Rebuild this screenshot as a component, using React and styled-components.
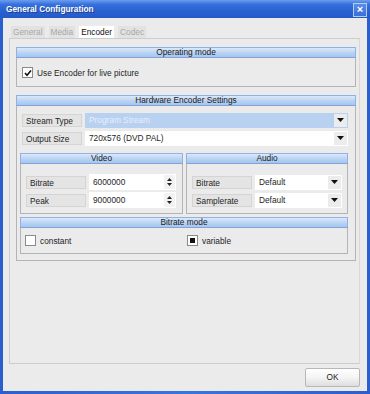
import React from "react";
import styled, { createGlobalStyle } from "styled-components";

const GlobalStyle = createGlobalStyle`
  html, body {
    margin: 0;
    padding: 0;
    background: #ffffff;
  }
  body {
    font-family: "Liberation Sans", Arial, sans-serif;
    font-size: 8.3px;
    color: #1e1e1e;
  }
`;

function App() {
  return (
    <>
      <GlobalStyle />
      <Window>
        <TitleBar>
          <Title>General Configuration</Title>
          <CloseButton>×</CloseButton>
        </TitleBar>
        <Body>
          <Tabs>
            <Tab>General</Tab>
            <Tab>Media</Tab>
            <Tab active>Encoder</Tab>
            <Tab>Codec</Tab>
          </Tabs>
          <Pane>
            <Group>
              <GroupHeader>Operating mode</GroupHeader>
              <GroupBody pad="9px 6px 8px 5px">
                <CheckRow>
                  <CheckBox>
                    <svg width="8" height="8" viewBox="0 0 8 8">
                      <path d="M1 4 L3 6.2 L7 1.5" stroke="#111" strokeWidth="1.6" fill="none" />
                    </svg>
                  </CheckBox>
                  Use Encoder for live picture
                </CheckRow>
              </GroupBody>
            </Group>

            <Group top={8}>
              <GroupHeader>Hardware Encoder Settings</GroupHeader>
              <GroupBody pad="6px 7px 6px 3px">
                <FieldRow indent={2}>
                  <Label width={60}>Stream Type</Label>
                  <Combo disabled>
                    <ComboText>Program Stream</ComboText>
                    <ComboArrow />
                  </Combo>
                </FieldRow>
                <FieldRow indent={2}>
                  <Label width={60}>Output Size</Label>
                  <Combo>
                    <ComboText>720x576 (DVD PAL)</ComboText>
                    <ComboArrow />
                  </Combo>
                </FieldRow>

                <Split>
                  <Group grow>
                    <GroupHeader>Video</GroupHeader>
                    <GroupBody pad="10px 6px 5px 5px">
                      <FieldRow>
                        <Label width={60}>Bitrate</Label>
                        <Spin>
                          <ComboText>6000000</ComboText>
                          <SpinArrows />
                        </Spin>
                      </FieldRow>
                      <FieldRow>
                        <Label width={60}>Peak</Label>
                        <Spin>
                          <ComboText>9000000</ComboText>
                          <SpinArrows />
                        </Spin>
                      </FieldRow>
                    </GroupBody>
                  </Group>
                  <Group grow>
                    <GroupHeader>Audio</GroupHeader>
                    <GroupBody pad="10px 5px 5px 5px">
                      <FieldRow>
                        <Label width={60}>Bitrate</Label>
                        <Combo>
                          <ComboText>Default</ComboText>
                          <ComboArrow />
                        </Combo>
                      </FieldRow>
                      <FieldRow>
                        <Label width={60}>Samplerate</Label>
                        <Combo>
                          <ComboText>Default</ComboText>
                          <ComboArrow />
                        </Combo>
                      </FieldRow>
                    </GroupBody>
                  </Group>
                </Split>

                <Group top={1}>
                  <GroupHeader>Bitrate mode</GroupHeader>
                  <GroupBody pad="7px 4px 7px 4px">
                    <ModeRow>
                      <CheckRow>
                        <CheckBox />
                        constant
                      </CheckRow>
                      <CheckRow>
                        <CheckBox>
                          <Dot />
                        </CheckBox>
                        variable
                      </CheckRow>
                    </ModeRow>
                  </GroupBody>
                </Group>
              </GroupBody>
            </Group>
          </Pane>
          <Footer>
            <OkButton>OK</OkButton>
          </Footer>
        </Body>
      </Window>
    </>
  );
}

function ComboArrow() {
  return (
    <ArrowBox>
      <svg width="7" height="4" viewBox="0 0 7 4">
        <path d="M0 0 H7 L3.5 4 Z" fill="#111" />
      </svg>
    </ArrowBox>
  );
}

function SpinArrows() {
  return (
    <SpinBox>
      <svg width="5" height="3" viewBox="0 0 5 3">
        <path d="M0 3 H5 L2.5 0 Z" fill="#222" />
      </svg>
      <svg width="5" height="3" viewBox="0 0 5 3">
        <path d="M0 0 H5 L2.5 3 Z" fill="#222" />
      </svg>
    </SpinBox>
  );
}

const Window = styled.div`
  width: 370px;
  height: 394px;
  box-sizing: border-box;
  padding: 0 3px 3px 3px;
  background: linear-gradient(90deg, #2a5fcf 0%, #3a74e0 50%, #2a5fcf 100%);
  display: flex;
  flex-direction: column;
`;

const TitleBar = styled.div`
  height: 18px;
  flex: none;
  display: flex;
  align-items: center;
  justify-content: space-between;
  margin: 0 -3px;
  padding-left: 6px;
  padding-right: 3px;
  background: linear-gradient(180deg, #6d9df0 0%, #3570dc 25%, #2a62d2 60%, #2459c8 100%);
`;

const Title = styled.div`
  color: #ffffff;
  font-weight: bold;
  font-size: 8.3px;
  text-shadow: 1px 1px 0 #1a3f8a;
`;

const CloseButton = styled.div`
  width: 12px;
  height: 12px;
  margin-top: 1px;
  border: 1px solid #b6cdf3;
  background: linear-gradient(180deg, #5a8ce8 0%, #3a6fd8 100%);
  color: #ffffff;
  font-weight: bold;
  font-size: 11px;
  line-height: 11px;
  text-align: center;
`;

const Body = styled.div`
  flex: 1;
  background: #ebebeb;
  padding: 8px 7px 4px 6px;
  display: flex;
  flex-direction: column;
`;

const Tabs = styled.div`
  display: flex;
  gap: 4px;
  padding-left: 2px;
  height: 12px;
`;

const Tab = styled.div`
  padding: 0 2px;
  line-height: 12px;
  background: ${(p) => (p.active ? "#ffffff" : "#e2e2e2")};
  color: ${(p) => (p.active ? "#111111" : "#a8a8a8")};
`;

const Pane = styled.div`
  flex: 1;
  border: 1px solid #cdcdcd;
  border-right-color: #d8d8d8;
  padding: 8px 3px 0 6px;
  display: flex;
  flex-direction: column;
`;

const Group = styled.div`
  margin-top: ${(p) => p.top || 0}px;
  border: 1px solid #b4b4b4;
  border-top: none;
  background: #ebebeb;
  flex: ${(p) => (p.grow ? "1 1 0" : "none")};
`;

const GroupHeader = styled.div`
  height: 9px;
  line-height: 9px;
  text-align: center;
  border: 1px solid #8eb2e2;
  border-bottom-color: #7fa5d8;
  margin: 0 -1px;
  background: linear-gradient(180deg, #dce9fa 0%, #bcd4f4 50%, #a6c5ee 100%);
  color: #1a1a1a;
`;

const GroupBody = styled.div`
  padding: ${(p) => p.pad};
  display: flex;
  flex-direction: column;
  gap: 2px;
`;

const CheckRow = styled.div`
  display: flex;
  align-items: center;
  gap: 4px;
  height: 11px;
`;

const CheckBox = styled.div`
  width: 9px;
  height: 9px;
  border: 1px solid #8a8a8a;
  background: #ffffff;
  display: flex;
  align-items: center;
  justify-content: center;
`;

const Dot = styled.div`
  width: 5px;
  height: 5px;
  background: #111111;
`;

const FieldRow = styled.div`
  display: flex;
  align-items: center;
  gap: 3px;
  height: 16px;
  margin-left: ${(p) => p.indent || 0}px;
`;

const Label = styled.div`
  width: ${(p) => p.width}px;
  flex: none;
  box-sizing: border-box;
  height: 13px;
  line-height: 12px;
  padding-left: 3px;
  background: #e4e4e4;
  border: 1px solid #d4d4d4;
`;

const Combo = styled.div`
  flex: 1;
  height: 15px;
  display: flex;
  align-items: center;
  background: ${(p) => (p.disabled ? "#b9d1f1" : "#ffffff")};
  color: ${(p) => (p.disabled ? "#e8effa" : "#1e1e1e")};
`;

const Spin = styled(Combo)`
  height: 16px;
  flex: none;
  width: 87px;
`;

const ComboText = styled.div`
  flex: 1;
  padding-left: 4px;
  white-space: nowrap;
`;

const ArrowBox = styled.div`
  width: 13px;
  height: 13px;
  margin-right: 1px;
  background: #ececec;
  display: flex;
  align-items: center;
  justify-content: center;
`;

const SpinBox = styled.div`
  width: 11px;
  height: 14px;
  margin-right: 1px;
  background: #f2f2f2;
  display: flex;
  flex-direction: column;
  align-items: center;
  justify-content: center;
  gap: 2px;
`;

const Split = styled.div`
  display: flex;
  gap: 3px;
  margin-top: 5px;
`;

const ModeRow = styled.div`
  display: grid;
  grid-template-columns: 162px 1fr;
`;

const Footer = styled.div`
  display: flex;
  justify-content: flex-end;
  padding-top: 4px;
`;

const OkButton = styled.div`
  width: 53px;
  height: 17px;
  line-height: 17px;
  text-align: center;
  border: 1px solid #b8b8b8;
  border-radius: 2px;
  background: linear-gradient(180deg, #ffffff 0%, #f4f4f4 50%, #dedede 100%);
  color: #1a1a1a;
`;

export default App;
